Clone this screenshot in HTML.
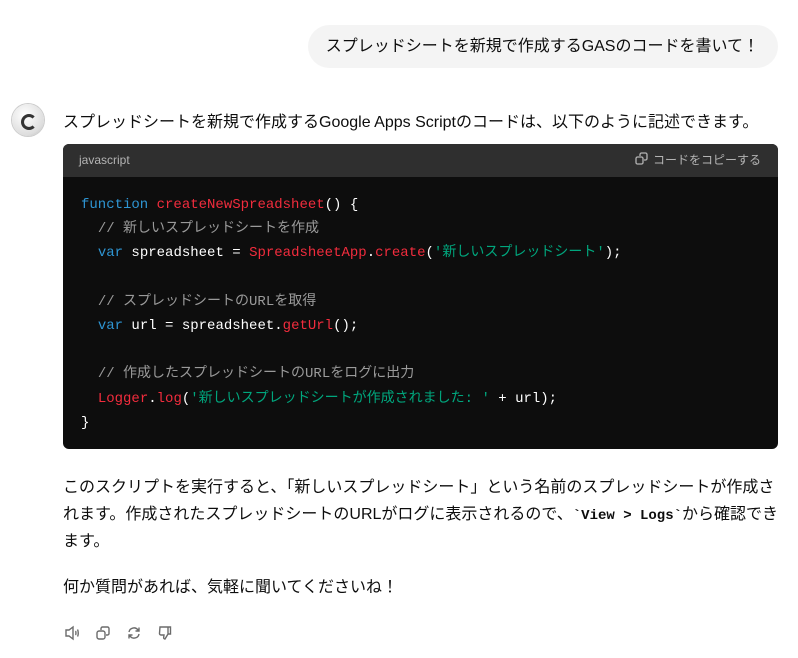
<!DOCTYPE html>
<html><head><meta charset="utf-8"><style>
body{margin:0;background:#fff;width:798px;height:658px;overflow:hidden;font-family:"Liberation Sans","Noto Sans CJK JP",sans-serif;color:#0d0d0d;font-size:16px}
.user{position:absolute;right:20px;top:25px;height:43px;background:#f4f4f4;border-radius:22px;padding:0 19px 0 18px;line-height:43px;font-size:16px}
.av{position:absolute;left:12px;top:104px;width:32px;height:32px;border-radius:50%;background:radial-gradient(circle at 40% 35%,#fff,#ddd 70%,#aaa);box-shadow:0 0 0 1px #ccc}
.av:after{content:"";position:absolute;left:9px;top:10px;width:10px;height:10px;border:3px solid #333;border-radius:50%;border-right-color:transparent}
.t1{position:absolute;left:63px;top:110px;line-height:26px}
.code{position:absolute;left:63px;top:144px;width:715px;height:305px;background:#0d0d0d;border-radius:6px;overflow:hidden}
.hd{height:33px;background:#2f2f2f;color:#b4b4b4;font-size:12px;line-height:33px;padding:0 16px;position:relative}
.hd .cp{position:absolute;right:17px;top:0}
pre{margin:0;padding:16px 18px;font-family:"Liberation Mono","Noto Sans CJK JP",monospace;font-size:14px;line-height:24.2px;color:#fff}
.k{color:#2e95d3}.f{color:#f22c3d}.s{color:#00a67d}.c{color:#9a9a9a}
.p{position:absolute;left:63px;width:715px;line-height:26.5px}
.icons{position:absolute;left:63px;top:624px;display:flex;gap:13px}
</style></head><body>
<div class="user">スプレッドシートを新規で作成するGASのコードを書いて！</div>
<div class="av"></div>
<div class="t1">スプレッドシートを新規で作成するGoogle Apps Scriptのコードは、以下のように記述できます。</div>
<div class="code"><div class="hd">javascript<span class="cp"><svg width="14" height="14" viewBox="0 0 14 14" style="vertical-align:-2px;margin-right:4px" fill="none" stroke="#b4b4b4" stroke-width="1.3"><rect x="1" y="5" width="7" height="7" rx="1.5"/><path d="M5 4V2.5A1.5 1.5 0 0 1 6.5 1h4A1.5 1.5 0 0 1 12 2.5v4A1.5 1.5 0 0 1 10.5 8H9"/></svg>コードをコピーする</span></div>
<pre><span class="k">function</span> <span class="f">createNewSpreadsheet</span>() {
  <span class="c">// 新しいスプレッドシートを作成</span>
  <span class="k">var</span> spreadsheet = <span class="f">SpreadsheetApp</span>.<span class="f">create</span>(<span class="s">'新しいスプレッドシート'</span>);

  <span class="c">// スプレッドシートのURLを取得</span>
  <span class="k">var</span> url = spreadsheet.<span class="f">getUrl</span>();

  <span class="c">// 作成したスプレッドシートのURLをログに出力</span>
  <span class="f">Logger</span>.<span class="f">log</span>(<span class="s">'新しいスプレッドシートが作成されました: '</span> + url);
}</pre></div>
<div class="p" style="top:475px">このスクリプトを実行すると、「新しいスプレッドシート」という名前のスプレッドシートが作成されます。作成されたスプレッドシートのURLがログに表示されるので、<b style="font-family:'Liberation Mono',monospace;font-size:14px">`View &gt; Logs`</b>から確認できます。</div>
<div class="p" style="top:575px">何か質問があれば、気軽に聞いてくださいね！</div>
<div class="icons">
<svg width="18" height="18" viewBox="0 0 18 18" fill="none" stroke="#6b6b6b" stroke-width="1.4"><path d="M3 6h3l4-3v12l-4-3H3z"/><path d="M12.5 7c.6.6.6 3.4 0 4M14.5 5.5c1 1.5 1 5.5 0 7"/></svg>
<svg width="18" height="18" viewBox="0 0 18 18" fill="none" stroke="#6b6b6b" stroke-width="1.4"><rect x="3" y="7" width="8" height="8" rx="2"/><path d="M7 6V4.5A1.5 1.5 0 0 1 8.5 3h5A1.5 1.5 0 0 1 15 4.5v5a1.5 1.5 0 0 1-1.5 1.5H12"/></svg>
<svg width="18" height="18" viewBox="0 0 18 18" fill="none" stroke="#6b6b6b" stroke-width="1.4"><path d="M4 8a5 5 0 0 1 9-2l1 1M14 10a5 5 0 0 1-9 2l-1-1M14 3.5V7h-3.5M4 14.5V11h3.5"/></svg>
<svg width="18" height="18" viewBox="0 0 18 18" fill="none" stroke="#6b6b6b" stroke-width="1.4"><path d="M4 3h8v7l-3 5c-1 0-1.5-.8-1.3-1.7L8 11H5a1.5 1.5 0 0 1-1.5-1.7zM12 3h2.5v7H12"/></svg>
</div>
</body></html>
